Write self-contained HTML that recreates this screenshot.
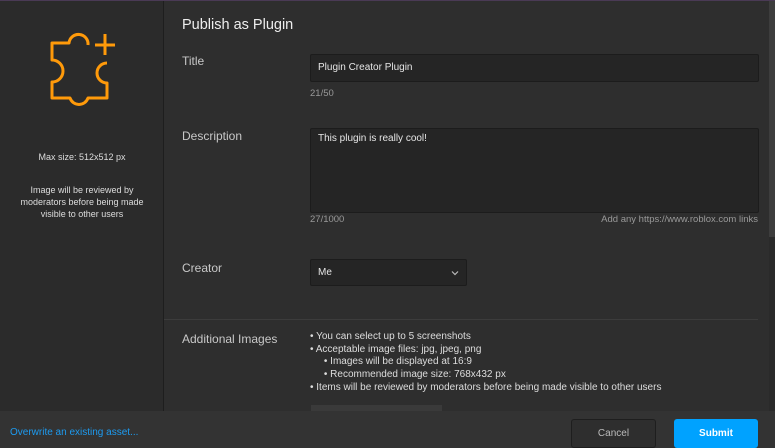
<!DOCTYPE html>
<html><head><style>
*{margin:0;padding:0;box-sizing:border-box}
body{width:775px;height:448px;background:#2e2e2e;font-family:"Liberation Sans",sans-serif;color:#ddd;position:relative;overflow:hidden}
.a{position:absolute}
.lbl{position:absolute;left:182px;font-size:12px;color:#c8c8c8}
.small{font-size:9.5px;color:#999}
.box{position:absolute;background:#252525;border:1px solid #1c1c1c;border-radius:2px;font-size:10px;color:#e6e6e6;padding-left:7px}
</style></head><body>
<div class="a" style="left:0;top:0;width:775px;height:1px;background:#4a3a55"></div>
<div class="a" style="left:0;top:1px;width:164px;height:410px;background:#2b2b2b;border-right:1px solid #1e1e1e"></div>
<svg class="a" style="left:0;top:0" width="164" height="130" viewBox="0 0 164 130">
<g fill="none" stroke="#ff9a0a" stroke-width="3" stroke-linejoin="round">
<path d="M88,45 A9.5 9.5 0 1 0 69,43 H52 V60 A11 11 0 0 1 52,82 V98 H70 A9.5 9.5 0 0 0 88,98 H107 V83 A10 10 0 0 1 107,63"/>
<path d="M95,45 H115 M105,34 V55"/>
</g></svg>
<div class="a" style="left:0;width:164px;top:152px;text-align:center;font-size:9px;color:#ddd">Max size: 512x512 px</div>
<div class="a" style="left:0;width:164px;top:184px;text-align:center;font-size:9px;color:#ddd;line-height:12px">Image will be reviewed by<br>moderators before being made<br>visible to other users</div>

<div class="a" style="left:182px;top:17px;font-size:14.5px;color:#eee">Publish as Plugin</div>
<div class="lbl" style="top:54px">Title</div>
<div class="box" style="left:310px;top:54px;width:449px;height:28px;line-height:26px">Plugin Creator Plugin</div>
<div class="a small" style="left:310px;top:88px">21/50</div>
<div class="lbl" style="top:129px">Description</div>
<div class="box" style="left:310px;top:128px;width:449px;height:85px;padding-top:4px">This plugin is really cool!</div>
<div class="a small" style="left:310px;top:214px">27/1000</div>
<div class="a small" style="right:17px;top:214px">Add any https://www.roblox.com links</div>
<div class="lbl" style="top:261px">Creator</div>
<div class="box" style="left:310px;top:259px;width:157px;height:27px;line-height:25px">Me
<svg style="position:absolute;right:7px;top:10px" width="8" height="6" viewBox="0 0 8 6"><path d="M1,1.5 L4,4.5 L7,1.5" fill="none" stroke="#bbb" stroke-width="1.2"/></svg></div>
<div class="a" style="left:164px;top:319px;width:594px;height:1px;background:#3c3c3c"></div>
<div class="lbl" style="top:332px">Additional Images</div>
<div class="a" style="left:310px;top:331px;font-size:10px;color:#ddd;line-height:12.7px">
• You can select up to 5 screenshots<br>• Acceptable image files: jpg, jpeg, png<br>&nbsp;&nbsp;&nbsp;&nbsp;&nbsp;• Images will be displayed at 16:9<br>&nbsp;&nbsp;&nbsp;&nbsp;&nbsp;• Recommended image size: 768x432 px<br>• Items will be reviewed by moderators before being made visible to other users</div>
<div class="a" style="left:311px;top:405px;width:131px;height:6px;background:#3a3a3a"></div>
<div class="a" style="left:769px;top:1px;width:6px;height:410px;background:#2a2a2a"></div>
<div class="a" style="left:769px;top:1px;width:6px;height:236px;background:#3d3d3d"></div>

<div class="a" style="left:0;top:411px;width:775px;height:37px;background:#333"></div>
<div class="a" style="left:10px;top:427px;font-size:10px;color:#1d9bf0">Overwrite an existing asset...</div>
<div class="a" style="left:571px;top:419px;width:85px;height:29px;background:#2e2e2e;border:1px solid #1e1e1e;border-radius:3px;text-align:center;line-height:27px;font-size:10px;color:#bbb">Cancel</div>
<div class="a" style="left:674px;top:419px;width:84px;height:29px;background:#00a2ff;border-radius:3px;text-align:center;line-height:29px;font-size:10px;font-weight:bold;color:#fff">Submit</div>
</body></html>
